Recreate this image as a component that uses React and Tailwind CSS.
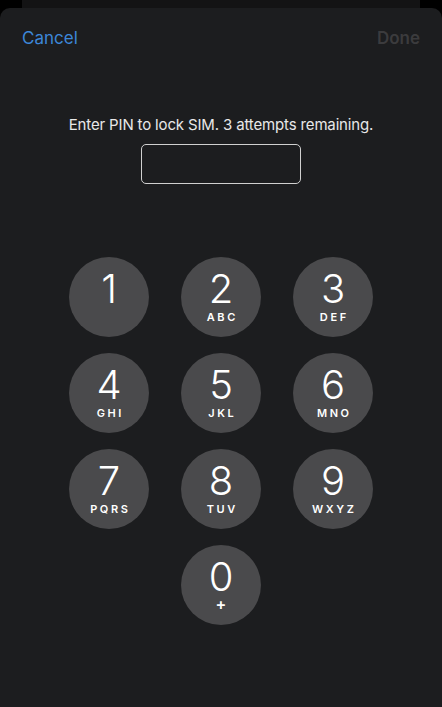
import React from "react";

const keys = [
  ["1", ""],
  ["2", "ABC"],
  ["3", "DEF"],
  ["4", "GHI"],
  ["5", "JKL"],
  ["6", "MNO"],
  ["7", "PQRS"],
  ["8", "TUV"],
  ["9", "WXYZ"],
];

function Key({ d, l }) {
  return (
    <div className="w-[80px] h-[80px] rounded-full bg-[#4a4a4c] flex flex-col items-center pt-[12px] text-white">
      <div className="text-[40px] leading-[40px] font-light">{d}</div>
      {l ? (
        <div className="mt-[2px] text-[11px] leading-[12px] font-semibold tracking-[2.6px] pl-[2.6px]">{l}</div>
      ) : null}
    </div>
  );
}

export default function App() {
  return (
    <div className="w-[442px] h-[707px] bg-black flex flex-col overflow-hidden" style={{ fontFamily: "Inter, 'Noto Sans', sans-serif" }}>
      <div className="h-[8px] px-[22px] shrink-0">
        <div className="h-full bg-[#131314]"></div>
      </div>
      <div className="flex-1 bg-[#1c1d1f] rounded-t-[10px] flex flex-col">
        <div className="flex justify-between px-[22px] pt-[19px] text-[17px] leading-[22px]">
          <span className="text-[#3d87d9]">Cancel</span>
          <span className="text-[#3b3b3d] font-semibold">Done</span>
        </div>
        <div className="mt-[66px] text-center text-[15px] leading-[20px] tracking-[-0.15px] text-[#e8e8e8]">
          Enter PIN to lock SIM. 3 attempts remaining.
        </div>
        <div className="mt-[9px] mx-auto w-[160px] h-[40px] rounded-[5px] border border-[#d0d0d0]"></div>
        <div className="mt-[73px] mx-auto grid grid-cols-[80px_80px_80px] gap-x-[32px] gap-y-[16px]">
          {keys.map(([d, l]) => (
            <Key key={d} d={d} l={l} />
          ))}
          <div></div>
          <div className="w-[80px] h-[80px] rounded-full bg-[#4a4a4c] flex flex-col items-center pt-[12px] text-white">
            <div className="text-[40px] leading-[40px] font-light">0</div>
            <div className="mt-[0px] text-[16px] leading-[14px] font-semibold">+</div>
          </div>
        </div>
      </div>
    </div>
  );
}
